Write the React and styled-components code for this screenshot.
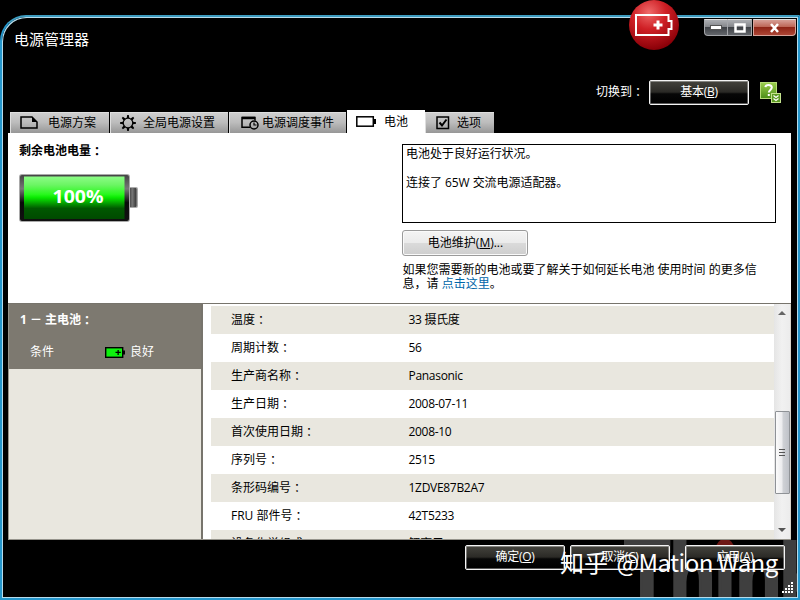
import React from 'react';
import styled, { createGlobalStyle } from 'styled-components';

const Global = createGlobalStyle`
  * { box-sizing: border-box; }
  body { margin: 0; background: #000; overflow: hidden; }
`;

const Desktop = styled.div`
  width: 800px;
  height: 600px;
  padding-top: 15px;
  background: #000;
  position: relative;
  font: 12px/14px 'Open Sans', 'Noto Sans CJK SC', sans-serif;
  color: #000;
  overflow: hidden;
`;
const WindowFrame = styled.div`
  height: 585px;
  border: 2px solid #2596cb;
  border-top-color: #3d9cc0;
  border-radius: 26px 0 0 0;
  box-shadow: inset 1px 1px 0 #b6dcec, inset -1px -1px 0 #b6dcec;
  display: flex;
  flex-direction: column;
  padding: 1px 7px 1px 6px;
`;
const TitleBar = styled.header`
  height: 59px;
  display: flex;
  justify-content: space-between;
  margin-right: -5px;
`;
const Title = styled.h1`
  margin: 11px 0 0 6px;
  font-size: 15px;
  line-height: 20px;
  font-weight: 400;
  color: #fff;
`;
const Controls = styled.div`
  display: flex;
  margin-top: 1px;
`;
const ControlButton = styled.button`
  width: ${p => (p.$close ? 43 : 24)}px;
  height: 17px;
  padding: 0;
  border: 1px solid ${p => (p.$close ? '#d7a49b' : '#a4a6aa')};
  border-top-color: #ddd;
  border-left-width: ${p => (p.$joined ? 0 : 1)}px;
  border-radius: ${p => p.$radius || '0'};
  margin-left: ${p => (p.$close ? 1 : 0)}px;
  display: grid;
  place-items: center;
  background: ${p => p.$close
    ? 'linear-gradient(#d49a90 0 5%, #bd6656 45%, #8f2516 50%, #ad4535)'
    : 'linear-gradient(#a8aaae 0 5%, #85878c 45%, #3f4247 50%, #63666b)'};
`;
const SwitchRow = styled.div`
  height: 31px;
  display: flex;
  align-items: center;
  justify-content: flex-end;
  color: #fff;
  padding-right: 9px;
`;
const SwitchLabel = styled.span`
  margin-right: 5px;
  padding-bottom: 2px;
`;
const DarkButton = styled.button`
  width: 100px;
  height: 25px;
  padding: 0 0 2px;
  border: 1px solid #f4f4f4;
  border-radius: 2px;
  box-shadow: inset 0 0 0 1px rgba(255, 255, 255, 0.35);
  color: #fff;
  font: inherit;
  letter-spacing: -0.3px;
  background: linear-gradient(#44433d, #2b2a26 48%, #070707 56%, #000);
  margin-left: ${p => p.$gap || 0}px;
`;
const HelpSlot = styled.span`
  width: 22px;
  height: 23px;
  margin-left: 11px;
`;
const Tabs = styled.nav`
  display: flex;
  align-items: flex-end;
  height: 23px;
  flex: none;
  margin-top: 2px;
  padding-left: 2px;
`;
const Tab = styled.button`
  width: ${p => p.$w}px;
  height: ${p => (p.$active ? 23 : 21)}px;
  flex: none;
  border: 0;
  border-right: ${p => (p.$active || p.$last ? 0 : 1)}px solid #000;
  padding: 0 0 0 ${p => p.$pad}px;
  display: flex;
  align-items: center;
  gap: ${p => p.$space}px;
  font: inherit;
  white-space: nowrap;
  color: #000;
  background: ${p => (p.$active ? '#fff' : 'linear-gradient(#d0d0d0, #bcbcbc 50%, #979797)')};
  box-shadow: ${p => (p.$active ? 'none' : 'inset 1px 1px 0 #dedede')};
  svg { flex: none; }
`;
const Panel = styled.main`
  height: 407px;
  flex: none;
  width: 783px;
  background: #fff;
  display: flex;
  flex-direction: column;
`;
const Summary = styled.section`
  height: 170px;
  flex: none;
  display: flex;
  justify-content: space-between;
  padding: 11px 15px 0 11px;
`;
const Charge = styled.div`
  display: flex;
  flex-direction: column;
  svg { margin: 15px 0 0 -1px; }
`;
const Heading = styled.strong`
  display: block;
  font-weight: 700;
`;
const Info = styled.div`
  width: 374px;
`;
const Status = styled.div`
  height: 79px;
  border: 1px solid #000;
  padding: 2px 3px;
  line-height: 14.5px;
  letter-spacing: -0.05px;
  p { margin: 0 0 14.5px; }
`;
const LightButton = styled.button`
  width: 126px;
  height: 26px;
  display: block;
  margin: 7px 0 7px;
  padding: 0 0 1px 1px;
  border: 1px solid #9b9b9b;
  border-radius: 3px;
  box-shadow: inset 0 0 0 1px #fafafa;
  background: linear-gradient(#f4f4f4, #ebebeb 48%, #dadada 52%, #cecece);
  font: inherit;
  color: #000;
`;
const Hint = styled.p`
  margin: 0;
  padding-left: 0.5px;
  white-space: nowrap;
`;
const Link = styled.a`
  color: #0066a8;
`;
const Details = styled.section`
  height: 237px;
  border-top: 1px solid #77746c;
  border-bottom: 1px solid #96948c;
  display: flex;
`;
const Sidebar = styled.aside`
  width: 195px;
  background: #e9e7df;
  border-left: 1px solid #96948c;
  border-right: 2px solid #77746c;
`;
const BatteryCard = styled.div`
  height: 65px;
  background: #7d7970;
  color: #fff;
  padding: 9px 0 0 11px;
`;
const Condition = styled.div`
  display: flex;
  align-items: center;
  margin: 18px 0 0 10px;
  span { width: 75px; }
  svg { margin-right: 5px; }
`;
const Table = styled.div`
  width: 571px;
  padding: 2px 0 0 8px;
  overflow: hidden;
`;
const Row = styled.div`
  height: 28px;
  display: grid;
  grid-template-columns: 177.5px 1fr;
  align-items: center;
  padding-left: 20px;
  background: ${p => (p.$shade ? '#e9e7df' : '#fff')};
`;
const Value = styled.span`
  letter-spacing: -0.3px;
`;
const Scrollbar = styled.div`
  width: 17px;
  background: linear-gradient(90deg, #e5e5e5, #f1f1f1 50%, #ececec);
  display: flex;
  flex-direction: column;
  align-items: center;
  border-right: 1px solid #d8d4c8;
`;
const Arrow = styled.svg`
  width: 8px;
  height: 5px;
  flex: none;
  margin: ${p => (p.$down ? '34px 0 0' : '6px 0 95px')};
`;
const Thumb = styled.div`
  width: 15px;
  height: 83px;
  flex: none;
  margin-top: 1px;
  border: 1px solid #8f9296;
  border-radius: 1px;
  background: linear-gradient(90deg, #fbfbfb, #ececee 45%, #cfd1d5 55%, #bfc2c8);
  display: grid;
  place-items: center;
`;
const Footer = styled.footer`
  flex: 1;
  width: 789px;
  position: relative;
  display: flex;
  justify-content: flex-end;
  align-items: flex-start;
  padding: 5px 12px 0 0;
  overflow: hidden;
`;
const BackLogo = styled.svg`
  position: absolute;
  left: 616px;
  top: 0;
`;
const FooterButton = styled(DarkButton)`
  position: relative;
`;
const Watermark = styled.div`
  position: absolute;
  left: 560px;
  top: 547px;
  font: 24px/30px 'Noto Sans CJK SC', sans-serif;
  white-space: nowrap;
  color: #fff;
`;
const Handle = styled.span`
  margin-left: 3px;
  letter-spacing: -0.55px;
`;
const Orb = styled.div`
  position: absolute;
  left: 629px;
  top: 0;
  width: 50px;
  height: 50px;
`;
const Grip = styled.svg`
  position: absolute;
  left: 782px;
  top: 582px;
`;
const ColonGlyph = styled.span`
  font-family: 'Noto Sans CJK JP', sans-serif;
  line-height: 1;
  vertical-align: -1px;
`;
const Colon = () => <ColonGlyph lang="ja">：</ColonGlyph>;

const HelpIcon = () => (
  <svg width="22" height="23" viewBox="0 0 22 23">
    <defs><linearGradient id="hg" x2="0" y2="1"><stop stopColor="#9ccf4d" /><stop offset="1" stopColor="#4b8d17" /></linearGradient></defs>
    <rect x="0.5" y="1.500" width="16" height="16" fill="url(#hg)" stroke="#b5db78" />
    <path d="M5.400 6.200C5.600 4.400 7 3.900 8.500 3.900c2 0 3.300 1 3.300 2.600 0 2.300-3 2.600-3 5M8.800 13v2" fill="none" stroke="#fff" strokeWidth="2" />
    <rect x="11.500" y="12.500" width="9" height="9" fill="#5d9a22" stroke="#c3e28e" />
    <path d="M13.500 14.500l2.500 2 2.500-2M13.500 17.500l2.500 2 2.500-2" fill="none" stroke="#fff" strokeWidth="1.200" />
  </svg>
);
const PlanIcon = () => (
  <svg width="18" height="13"><path d="M1 1h11l5 5v6H1z" fill="none" stroke="#000" strokeWidth="1.500" /><path d="M12 1l5 5h-5z" /></svg>
);
const GearIcon = () => (
  <svg width="16" height="16" viewBox="-8 -8 16 16">
    <circle r="4.800" fill="none" stroke="#000" strokeWidth="1.300" />
    {[0, 45, 90, 135, 180, 225, 270, 315].map(a => <path key={a} d="M-1.300-5L-.8-8H.8L1.300-5z" transform={`rotate(${a})`} />)}
  </svg>
);
const ScheduleIcon = () => (
  <svg width="18" height="14" fill="none" stroke="#000" strokeWidth="1.500">
    <path d="M9 11.200H1V1.500h13v3" /><path d="M1 2h13" strokeWidth="2.500" /><circle cx="13" cy="9" r="4" /><path d="M13 6.500V9h2.500" strokeWidth="1.200" />
  </svg>
);
const BatteryTabIcon = () => (
  <svg width="20" height="11"><rect x="0.800" y="0.800" width="16.500" height="9.400" fill="none" stroke="#000" strokeWidth="1.500" /><path d="M18 3h2v5h-2z" /></svg>
);
const CheckIcon = () => (
  <svg width="14" height="14" fill="none" stroke="#000"><rect x="1" y="1" width="11.500" height="11.500" strokeWidth="1.500" /><path d="M3.500 6.500l2.500 3 4.500-6" strokeWidth="2" /></svg>
);
const ChargeGraphic = () => (
  <svg width="120" height="50" viewBox="0 0 120 50">
    <defs>
      <linearGradient id="green" x2="0" y2="1"><stop stopColor="#8dfc87" /><stop offset=".2" stopColor="#6bf563" /><stop offset=".42" stopColor="#28f81d" /><stop offset=".5" stopColor="#08e800" /><stop offset=".75" stopColor="#005800" /><stop offset="1" stopColor="#004a00" /></linearGradient>
      <linearGradient id="shell" x2="0" y2="1"><stop stopColor="#444" /><stop offset=".3" stopColor="#777" /><stop offset=".6" stopColor="#0a0a0a" /><stop offset="1" stopColor="#111" /></linearGradient>
      <linearGradient id="cap"><stop stopColor="#222" /><stop offset=".5" stopColor="#777" /><stop offset="1" stopColor="#333" /></linearGradient>
    </defs>
    <rect x="110" y="14" width="10" height="21" rx="2" fill="#aaa" />
    <rect x="110" y="15" width="8.500" height="19" rx="1" fill="url(#cap)" />
    <rect x="1" y="1" width="111" height="48" rx="3" fill="#aaa" />
    <rect x="2" y="2" width="109" height="46" rx="2" fill="url(#shell)" />
    <rect x="6" y="3.500" width="100.500" height="42.500" fill="url(#green)" />
    <text x="34.500" y="29.500" fill="#fff" fontFamily="'Open Sans', sans-serif" fontWeight="700" fontSize="18.500" textLength="51" lengthAdjust="spacingAndGlyphs">100%</text>
  </svg>
);
const SmallBattery = () => (
  <svg width="20" height="11"><rect x="0.700" y="0.700" width="17" height="9.600" fill="#0df20d" stroke="#000" strokeWidth="1.400" /><path d="M18 3.500h2v4h-2zM12.500 3h1.300v1.800h2v1.300h-2v2h-1.300v-2h-2V4.800h2z" /></svg>
);

const rows = [
  ['温度', '33 摄氏度'],
  ['周期计数', '56'],
  ['生产商名称', 'Panasonic'],
  ['生产日期', '2008-07-11'],
  ['首次使用日期', '2008-10'],
  ['序列号', '2515'],
  ['条形码编号', '1ZDVE87B2A7'],
  ['FRU 部件号', '42T5233'],
  ['设备化学组成', '锂离子'],
];

export default function App() {
  return (
    <Desktop>
      <Global />
      <WindowFrame>
        <TitleBar>
          <Title>电源管理器</Title>
          <Controls>
            <ControlButton $radius="0 0 0 4px"><svg width="12" height="5"><rect x=".5" y=".5" width="11" height="4" fill="#fff" stroke="#555" /></svg></ControlButton>
            <ControlButton $joined><svg width="12" height="10"><rect x="1.500" y="1.500" width="9" height="7" fill="none" stroke="#fff" strokeWidth="2.500" /></svg></ControlButton>
            <ControlButton $close $radius="0 0 4px 0"><svg width="11" height="10"><path d="M2 1l7 8M9 1L2 9" stroke="#fff" strokeWidth="2.500" /></svg></ControlButton>
          </Controls>
        </TitleBar>
        <SwitchRow>
          <SwitchLabel>切换到<Colon /></SwitchLabel>
          <DarkButton>基本(<u>B</u>)</DarkButton>
          <HelpSlot><HelpIcon /></HelpSlot>
        </SwitchRow>
        <Tabs>
          <Tab $w={100} $pad={10} $space={10}><PlanIcon />电源方案</Tab>
          <Tab $w={119} $pad={10} $space={7}><GearIcon />全局电源设置</Tab>
          <Tab $w={118} $pad={12} $space={3}><ScheduleIcon />电源调度事件</Tab>
          <Tab $w={78} $pad={9} $space={8} $active><BatteryTabIcon />电池</Tab>
          <Tab $w={69} $pad={11} $space={7} $last><CheckIcon />选项</Tab>
        </Tabs>
        <Panel>
          <Summary>
            <Charge><Heading>剩余电池电量<Colon /></Heading><ChargeGraphic /></Charge>
            <Info>
              <Status><p>电池处于良好运行状况。</p><p>连接了 65W 交流电源适配器。</p></Status>
              <LightButton>电池维护(<u>M</u>)...</LightButton>
              <Hint>如果您需要新的电池或要了解关于如何延长电池 使用时间 的更多信<br />息，请 <Link>点击这里</Link>。</Hint>
            </Info>
          </Summary>
          <Details>
            <Sidebar>
              <BatteryCard>
                <Heading>1 － 主电池<Colon /></Heading>
                <Condition><span>条件</span><SmallBattery />良好</Condition>
              </BatteryCard>
            </Sidebar>
            <Table>
              {rows.map(([k, v], i) => <Row key={k} $shade={i % 2 === 0}><span>{k}<Colon /></span><Value>{v}</Value></Row>)}
            </Table>
            <Scrollbar>
              <Arrow><path d="M0 5l4-4 4 4z" fill="#666" /></Arrow>
              <Thumb><svg width="6" height="8"><path d="M0 .5h6M0 3.500h6M0 6.500h6" stroke="#555" /></svg></Thumb>
              <Arrow $down><path d="M0 0l4 4 4-4z" fill="#555" /></Arrow>
            </Scrollbar>
          </Details>
        </Panel>
        <Footer>
          <BackLogo width="173" height="57">
            <text transform="scale(.72 1)" x="0 63.2 125.7 154.9 216" y="71" fontFamily="'Liberation Sans', sans-serif" fontWeight="700" fontSize="104" fill="#3f3f3f" stroke="#3f3f3f" strokeWidth="4">Thınk</text>
            <circle cx="101" cy="8" r="9" fill="#6e1815" />
          </BackLogo>
          <FooterButton>确定(<u>O</u>)</FooterButton>
          <FooterButton $gap={5}>取消(<u>C</u>)</FooterButton>
          <FooterButton $gap={15}>应用(<u>A</u>)</FooterButton>
        </Footer>
      </WindowFrame>
      <Orb>
        <svg width="50" height="50">
          <defs><radialGradient id="orb" cx=".4" cy=".25" r=".75"><stop stopColor="#ef6a6a" /><stop offset=".45" stopColor="#cf1f25" /><stop offset="1" stopColor="#8a0008" /></radialGradient></defs>
          <circle cx="25" cy="25" r="25" fill="url(#orb)" />
          <path d="M7 15h32.500v6h3v8h-3v6H7z" fill="none" stroke="#fff" strokeWidth="2" />
          <path d="M29 20.500v9M24.500 25h9" stroke="#fff" strokeWidth="3" />
        </svg>
      </Orb>
      <Watermark>知乎 <Handle>@Mation Wang</Handle></Watermark>
      <Grip width="12" height="12" fill="#fff">
        {[[9, 0], [6, 3], [9, 3], [3, 6], [6, 6], [9, 6], [0, 9], [3, 9], [6, 9], [9, 9]].map(([x, y]) => <rect key={`${x}-${y}`} x={x} y={y} width="2" height="2" />)}
      </Grip>
    </Desktop>
  );
}
